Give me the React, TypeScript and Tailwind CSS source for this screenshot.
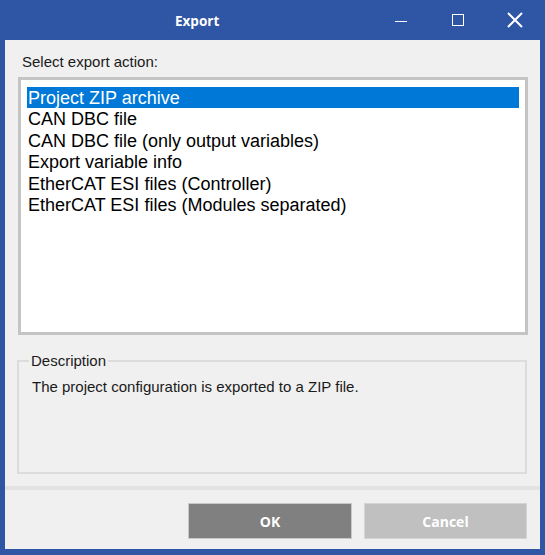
import React from "react";

const items = [
  "Project ZIP archive",
  "CAN DBC file",
  "CAN DBC file (only output variables)",
  "Export variable info",
  "EtherCAT ESI files (Controller)",
  "EtherCAT ESI files (Modules separated)",
];

function TitleBar() {
  return (
    <div className="flex h-[40px] items-center text-white">
      <div className="ml-[175px] mt-[3px] text-[13.5px] font-bold [font-family:'Open_Sans',sans-serif]">
        Export
      </div>
      <div className="ml-auto mr-[22px] flex items-center">
        <svg width="12" height="12" viewBox="0 0 12 12" className="mr-[45px] mt-[1px]">
          <path d="M0 6.5 H12" stroke="white" strokeWidth="1" />
        </svg>
        <svg width="12" height="12" viewBox="0 0 12 12" className="mr-[43px]">
          <rect x="0.5" y="0.5" width="11" height="11" fill="none" stroke="white" strokeWidth="1" />
        </svg>
        <svg width="16" height="16" viewBox="0 0 16 16">
          <path d="M1 1 L15 15 M15 1 L1 15" stroke="white" strokeWidth="2" />
        </svg>
      </div>
    </div>
  );
}

export default function App() {
  const selected = 0;
  return (
    <div className="flex h-[555px] w-[545px] flex-col bg-[#2f55a5] [font-family:'Liberation_Sans',Arial,sans-serif]">
      <TitleBar />
      <div className="mx-[5px] mb-[6px] flex flex-1 flex-col bg-[#f0f0f0]">
        <div className="ml-[17px] mt-[14px] text-[15px] leading-[16px] text-[#1a1a1a]">
          Select export action:
        </div>
        <div className="ml-[13px] mr-[12px] mt-[7px] h-[258px] border-[3px] border-[#c4c4c4] bg-white px-[6px] pt-[7px]">
          {items.map((it, i) => (
            <div
              key={it}
              className={
                "h-[21.4px] pl-[1px] text-[18px] leading-[22px] " +
                (i === selected ? "bg-[#0078d7] text-white" : "text-black")
              }
            >
              {it}
            </div>
          ))}
        </div>
        <fieldset className="ml-[12px] mr-[13px] mt-[18px] h-[121px] border-2 border-[#dcdcdc] px-[13px]">
          <legend className="-ml-[3px] px-[2px] text-[15px] leading-[16px] text-[#1a1a1a]">Description</legend>
          <div className="mt-[10px] text-[15px] leading-[16px] text-[#1a1a1a]">
            The project configuration is exported to a ZIP file.
          </div>
        </fieldset>
        <div className="mt-[12px] h-[4px] bg-[#e3e3e3]" />
        <div className="mt-[13px] flex justify-end gap-[12px] pr-[13px]">
          <button className="h-[36px] w-[164px] border border-[#c9c9c9] bg-[#808080] text-[14px] font-bold text-white [font-family:'Open_Sans',sans-serif]">
            OK
          </button>
          <button className="h-[36px] w-[163px] border border-[#d4d4d4] bg-[#c0c0c0] text-[14px] font-bold text-white [font-family:'Open_Sans',sans-serif]">
            Cancel
          </button>
        </div>
      </div>
    </div>
  );
}
